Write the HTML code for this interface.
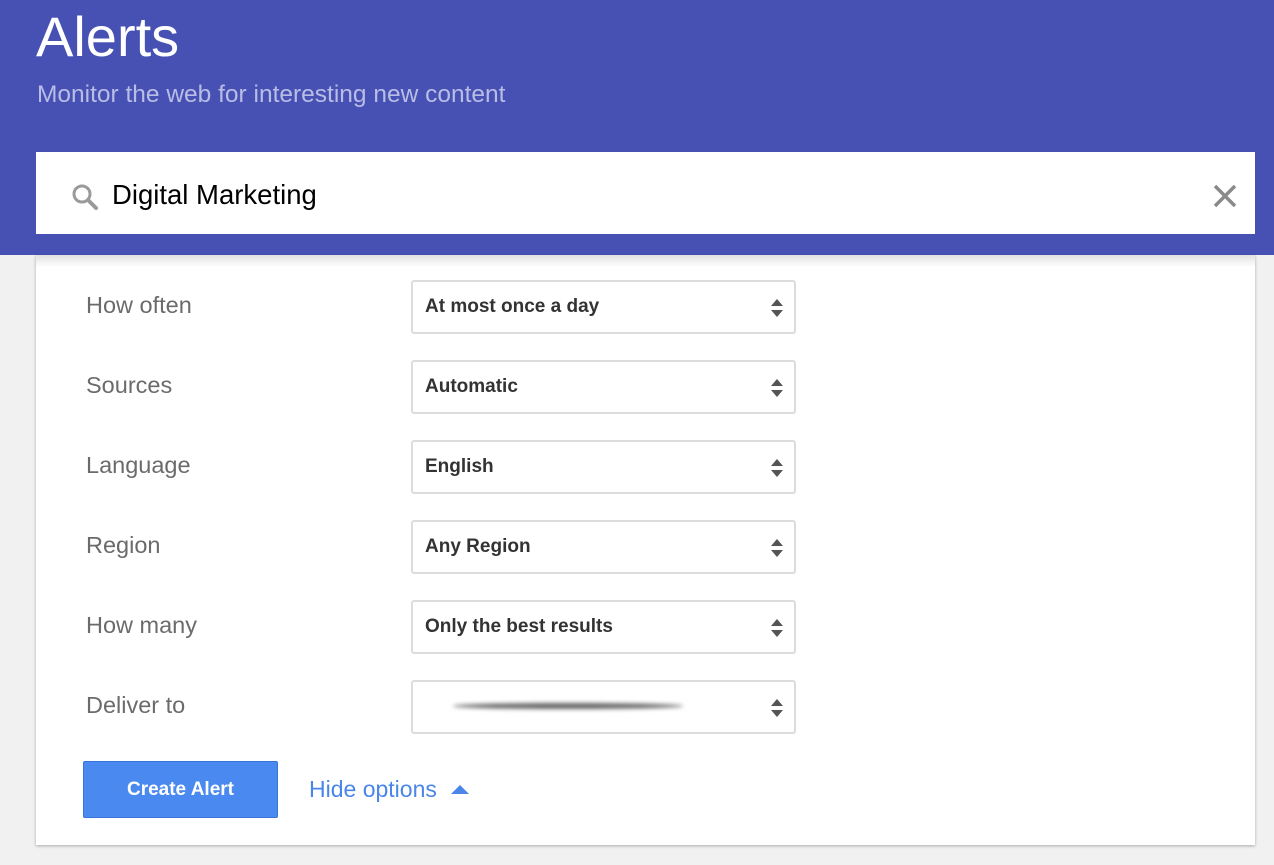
<!DOCTYPE html>
<html><head><style>
body{margin:0;width:1274px;height:865px;background:#f1f1f1;font-family:"Liberation Sans",Arial,sans-serif;position:relative;overflow:hidden}
.hdr{position:absolute;left:0;top:0;width:1274px;height:255px;background:#4751b3}
.title{position:absolute;left:36px;top:4px;font-size:56px;color:#fff}
.sub{position:absolute;left:37px;top:81px;font-size:24.5px;color:#b9bde6}
.card{position:absolute;left:36px;top:255px;width:1219px;height:590px;background:#fff;box-shadow:0 1px 3px rgba(0,0,0,.3)}
.search{position:absolute;left:36px;top:152px;width:1219px;height:82px;background:#fff;z-index:2}
.q{position:absolute;left:76px;top:27px;font-size:27.5px;color:#000}
.shadow{position:absolute;left:36px;top:255px;width:1219px;height:12px;background:linear-gradient(rgba(0,0,0,.12),rgba(0,0,0,0));z-index:1}
.lbl{position:absolute;left:86px;font-size:23.5px;color:#6b6b6b}
.sel{position:absolute;left:411px;width:381px;height:50px;border:2px solid #dcdcdc;border-radius:3px;background:#fff;box-sizing:content-box}
.sel span{position:absolute;left:12px;top:14px;font-size:19px;font-weight:bold;color:#333}
.arr{position:absolute;right:10px;top:14px}
.btn{position:absolute;left:83px;top:761px;width:195px;height:57px;background:#4a8af0;border:1px solid #3a74d8;box-sizing:border-box;border-radius:2px;color:#fff;font-weight:bold;font-size:19px;text-align:center;line-height:55px}
.hide{position:absolute;left:309px;top:776px;font-size:23px;color:#4a86e8}
</style></head><body>
<div class="hdr"><div class="title">Alerts</div><div class="sub">Monitor the web for interesting new content</div></div>
<div class="card"></div>
<div class="shadow"></div>
<div class="search">
<svg style="position:absolute;left:35px;top:31px" width="28" height="28" viewBox="0 0 28 28"><circle cx="11" cy="11" r="8" fill="none" stroke="#9a9a9a" stroke-width="3"/><path d="M17 17L25 25" stroke="#9a9a9a" stroke-width="4" stroke-linecap="round"/></svg>
<div class="q">Digital Marketing</div>
<svg style="position:absolute;left:1177px;top:32px" width="24" height="24"><path d="M2 2L22 22M22 2L2 22" stroke="#8a8a8a" stroke-width="3.5"/></svg>
</div>
<div class="lbl" style="top:292px">How often</div>
<div class="lbl" style="top:372px">Sources</div>
<div class="lbl" style="top:452px">Language</div>
<div class="lbl" style="top:532px">Region</div>
<div class="lbl" style="top:612px">How many</div>
<div class="lbl" style="top:692px">Deliver to</div>
<div class="sel" style="top:280px"><span>At most once a day</span><svg class="arr" width="14" height="24"><path d="M1 10L7 3L13 10ZM1 14L7 21L13 14Z" fill="#555"/></svg></div>
<div class="sel" style="top:360px"><span>Automatic</span><svg class="arr" width="14" height="24"><path d="M1 10L7 3L13 10ZM1 14L7 21L13 14Z" fill="#555"/></svg></div>
<div class="sel" style="top:440px"><span>English</span><svg class="arr" width="14" height="24"><path d="M1 10L7 3L13 10ZM1 14L7 21L13 14Z" fill="#555"/></svg></div>
<div class="sel" style="top:520px"><span>Any Region</span><svg class="arr" width="14" height="24"><path d="M1 10L7 3L13 10ZM1 14L7 21L13 14Z" fill="#555"/></svg></div>
<div class="sel" style="top:600px"><span>Only the best results</span><svg class="arr" width="14" height="24"><path d="M1 10L7 3L13 10ZM1 14L7 21L13 14Z" fill="#555"/></svg></div>
<div class="sel" style="top:680px"><div style="position:absolute;left:40px;top:21px;width:230px;height:6px;border-radius:50%;background:#666;filter:blur(2px)"></div><svg class="arr" width="14" height="24"><path d="M1 10L7 3L13 10ZM1 14L7 21L13 14Z" fill="#555"/></svg></div>
<div class="btn">Create Alert</div>
<div class="hide">Hide options <svg width="18" height="10" style="margin-left:8px;vertical-align:3px"><path d="M0 10L9 1L18 10Z" fill="#4a86e8"/></svg></div>
</body></html>
